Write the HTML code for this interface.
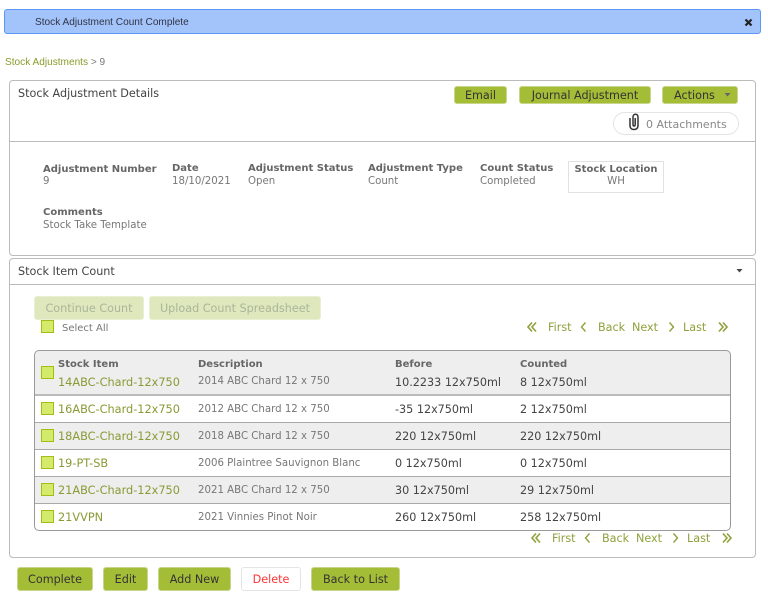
<!DOCTYPE html>
<html><head><meta charset="utf-8">
<style>
html,body{margin:0;padding:0;background:#fff;width:768px;height:597px;overflow:hidden}
body{position:relative;font-family:"DejaVu Sans","Liberation Sans",sans-serif}
.b,.t,.c,svg{position:absolute;box-sizing:border-box}
.t{white-space:nowrap;line-height:16px;height:16px;font-size:10px;color:#777;margin-top:1px}
.l{font-weight:bold;color:#666;font-size:10px;margin-top:2px}
.v{color:#777;font-size:10.2px;margin-top:2px}
.btn{position:absolute;box-sizing:border-box;background:#a3bd37;border:1px solid #c7d68a;border-radius:3px;color:#333;font-size:11.2px;text-align:center;white-space:nowrap}
.dis{position:absolute;box-sizing:border-box;background:#dfe8bd;border:1px solid #e9efd2;border-radius:3px;color:#aab69a;font-size:11.2px;text-align:center;line-height:24px;height:24px;white-space:nowrap}
.c{width:13px;height:13px;background:#d4ea6a;border:1.5px solid #a3bd17;left:41px}
.g{color:#8a9a35;font-size:11.3px}
.d{color:#777;font-size:10.2px;margin-top:2px}
.q{color:#444;font-size:11.2px}
.p{color:#8fa23c;font-size:11.2px}
.row{position:absolute;left:35px;width:695px;box-sizing:border-box;border-bottom:1px solid #aaa}
</style></head><body>

<div class="b" style="left:4px;top:9px;width:757px;height:25px;background:#a2c4fb;border:1px solid #5b97f5;border-radius:3px"></div>
<div class="t" style="left:35px;top:14px;font-family:'Liberation Sans',sans-serif;font-size:10.1px;color:#334">Stock Adjustment Count Complete</div>
<svg style="left:744px;top:18px" width="9" height="9" viewBox="0 0 9 9"><path d="M1.5 1.500L7.500 7.500M7.500 1.500L1.500 7.500" stroke="#222" stroke-width="2.200"/></svg>

<div class="t" style="left:5px;top:54px;font-family:'Liberation Sans',sans-serif;font-size:10.100px;color:#777"><span style="color:#8a9a2a">Stock Adjustments</span> &gt; 9</div>

<div class="b" style="left:9px;top:80px;width:747px;height:176px;border:1px solid #bbb;border-radius:4px"></div>
<div class="b" style="left:10px;top:141px;width:745px;height:1px;background:#bbb"></div>
<div class="t" style="left:18px;top:85px;font-size:11.200px;color:#444">Stock Adjustment Details</div>

<div class="btn" style="left:454px;top:86px;width:53px;height:18px;line-height:18px">Email</div>
<div class="btn" style="left:519px;top:86px;width:132px;height:18px;line-height:18px">Journal Adjustment</div>
<div class="btn" style="left:662px;top:86px;width:76px;height:18px;line-height:18px;text-align:left;padding-left:11px">Actions</div>
<svg style="left:724px;top:93px" width="7" height="4" viewBox="0 0 7 4"><path d="M0.500 0H6.500L3.500 3.500Z" fill="#666"/></svg>

<div class="b" style="left:613px;top:112px;width:126px;height:23px;border:1px solid #e4e4e4;border-radius:12px"></div>
<svg style="left:628px;top:113px" width="12" height="18" viewBox="0 0 12 18"><path d="M2 5V12.500C2 15 3.500 16.500 6 16.500S10 15 10 12.500V4C10 2.300 9 1.200 7.500 1.200S5 2.300 5 4V11.500C5 12.500 5.300 13 6 13S7.200 12.500 7.200 11.500V5" fill="none" stroke="#333" stroke-width="1.500"/></svg>
<div class="t" style="left:646px;top:116px;font-size:11px;color:#888">0 Attachments</div>

<div class="t l" style="left:43px;top:160px">Adjustment Number</div>
<div class="t v" style="left:43px;top:172px">9</div>
<div class="t l" style="left:172px;top:159px">Date</div>
<div class="t v" style="left:172px;top:172px">18/10/2021</div>
<div class="t l" style="left:248px;top:159px">Adjustment Status</div>
<div class="t v" style="left:248px;top:172px">Open</div>
<div class="t l" style="left:368px;top:159px">Adjustment Type</div>
<div class="t v" style="left:368px;top:172px">Count</div>
<div class="t l" style="left:480px;top:159px">Count Status</div>
<div class="t v" style="left:480px;top:172px">Completed</div>
<div class="b" style="left:568px;top:161px;width:96px;height:32px;border:1px solid #e2e2e2"></div>
<div class="t l" style="left:568px;width:96px;text-align:center;top:160px">Stock Location</div>
<div class="t v" style="left:568px;width:96px;text-align:center;top:172px">WH</div>
<div class="t l" style="left:43px;top:203px">Comments</div>
<div class="t v" style="left:43px;top:216px">Stock Take Template</div>

<div class="b" style="left:9px;top:258px;width:747px;height:300px;border:1px solid #bbb;border-radius:4px"></div>
<div class="b" style="left:10px;top:284px;width:745px;height:1px;background:#bbb"></div>
<div class="t" style="left:18px;top:263px;font-size:11.200px;color:#444">Stock Item Count</div>
<svg style="left:736px;top:269px" width="7" height="4" viewBox="0 0 7 4"><path d="M0.500 0H6.500L3.500 3.500Z" fill="#444"/></svg>

<div class="dis" style="left:34px;top:296px;width:110px">Continue Count</div>
<div class="dis" style="left:149px;top:296px;width:172px">Upload Count Spreadsheet</div>
<div class="c" style="top:320px"></div>
<div class="t" style="left:62px;top:320px;font-size:10px;color:#777">Select All</div>

<svg style="left:527px;top:321px" width="10" height="12" viewBox="0 0 10 12"><path d="M5 1.500L1 6L5 10.500M9 1.500L5 6L9 10.500" fill="none" stroke="#8fa23c" stroke-width="1.600"/></svg>
<div class="t p" style="left:548px;top:319px">First</div>
<svg style="left:580px;top:321px" width="7" height="12" viewBox="0 0 7 12"><path d="M5.500 1.500L1.500 6L5.500 10.500" fill="none" stroke="#8fa23c" stroke-width="1.400"/></svg>
<div class="t p" style="left:598px;top:319px">Back</div>
<div class="t p" style="left:632px;top:319px">Next</div>
<svg style="left:668px;top:321px" width="7" height="12" viewBox="0 0 7 12"><path d="M1.500 1.500L5.500 6L1.500 10.500" fill="none" stroke="#8fa23c" stroke-width="1.400"/></svg>
<div class="t p" style="left:683px;top:319px">Last</div>
<svg style="left:718px;top:321px" width="10" height="12" viewBox="0 0 10 12"><path d="M1 1.500L5 6L1 10.500M5 1.500L9 6L5 10.500" fill="none" stroke="#8fa23c" stroke-width="1.600"/></svg>

<div class="row" style="top:351px;height:45px;background:#eee;border-bottom:2px solid #bbb;border-radius:4px 4px 0 0"></div>
<div class="row" style="top:396px;height:27px;background:#fff"></div>
<div class="row" style="top:423px;height:27px;background:#eee"></div>
<div class="row" style="top:450px;height:27px;background:#fff"></div>
<div class="row" style="top:477px;height:27px;background:#eee"></div>
<div class="row" style="top:504px;height:26px;background:#fff;border-bottom:0"></div>
<div class="b" style="left:34px;top:350px;width:697px;height:181px;border:1px solid #999;border-radius:5px"></div>

<div class="t l" style="left:58px;top:355px">Stock Item</div>
<div class="t l" style="left:198px;top:355px">Description</div>
<div class="t l" style="left:395px;top:355px">Before</div>
<div class="t l" style="left:520px;top:355px">Counted</div>

<div class="c" style="top:366px"></div>
<div class="t g" style="left:58px;top:374px">14ABC-Chard-12x750</div>
<div class="t d" style="left:198px;top:372px">2014 ABC Chard 12 x 750</div>
<div class="t q" style="left:395px;top:374px">10.2233 12x750ml</div>
<div class="t q" style="left:520px;top:374px">8 12x750ml</div>

<div class="c" style="top:402px"></div>
<div class="t g" style="left:58px;top:401px">16ABC-Chard-12x750</div>
<div class="t d" style="left:198px;top:400px">2012 ABC Chard 12 x 750</div>
<div class="t q" style="left:395px;top:401px">-35 12x750ml</div>
<div class="t q" style="left:520px;top:401px">2 12x750ml</div>

<div class="c" style="top:429px"></div>
<div class="t g" style="left:58px;top:428px">18ABC-Chard-12x750</div>
<div class="t d" style="left:198px;top:427px">2018 ABC Chard 12 x 750</div>
<div class="t q" style="left:395px;top:428px">220 12x750ml</div>
<div class="t q" style="left:520px;top:428px">220 12x750ml</div>

<div class="c" style="top:456px"></div>
<div class="t g" style="left:58px;top:455px">19-PT-SB</div>
<div class="t d" style="left:198px;top:454px">2006 Plaintree Sauvignon Blanc</div>
<div class="t q" style="left:395px;top:455px">0 12x750ml</div>
<div class="t q" style="left:520px;top:455px">0 12x750ml</div>

<div class="c" style="top:483px"></div>
<div class="t g" style="left:58px;top:482px">21ABC-Chard-12x750</div>
<div class="t d" style="left:198px;top:481px">2021 ABC Chard 12 x 750</div>
<div class="t q" style="left:395px;top:482px">30 12x750ml</div>
<div class="t q" style="left:520px;top:482px">29 12x750ml</div>

<div class="c" style="top:510px"></div>
<div class="t g" style="left:58px;top:509px">21VVPN</div>
<div class="t d" style="left:198px;top:508px">2021 Vinnies Pinot Noir</div>
<div class="t q" style="left:395px;top:509px">260 12x750ml</div>
<div class="t q" style="left:520px;top:509px">258 12x750ml</div>

<svg style="left:531px;top:532px" width="10" height="12" viewBox="0 0 10 12"><path d="M5 1.500L1 6L5 10.500M9 1.500L5 6L9 10.500" fill="none" stroke="#8fa23c" stroke-width="1.600"/></svg>
<div class="t p" style="left:552px;top:530px">First</div>
<svg style="left:584px;top:532px" width="7" height="12" viewBox="0 0 7 12"><path d="M5.500 1.500L1.500 6L5.500 10.500" fill="none" stroke="#8fa23c" stroke-width="1.400"/></svg>
<div class="t p" style="left:602px;top:530px">Back</div>
<div class="t p" style="left:636px;top:530px">Next</div>
<svg style="left:672px;top:532px" width="7" height="12" viewBox="0 0 7 12"><path d="M1.500 1.500L5.500 6L1.500 10.500" fill="none" stroke="#8fa23c" stroke-width="1.400"/></svg>
<div class="t p" style="left:687px;top:530px">Last</div>
<svg style="left:722px;top:532px" width="10" height="12" viewBox="0 0 10 12"><path d="M1 1.500L5 6L1 10.500M5 1.500L9 6L5 10.500" fill="none" stroke="#8fa23c" stroke-width="1.600"/></svg>

<div class="btn" style="left:17px;top:567px;width:76px;height:24px;line-height:24px">Complete</div>
<div class="btn" style="left:103px;top:567px;width:45px;height:24px;line-height:24px">Edit</div>
<div class="btn" style="left:158px;top:567px;width:73px;height:24px;line-height:24px">Add New</div>
<div class="btn" style="left:241px;top:567px;width:60px;height:24px;line-height:24px;background:#fff;border-color:#e4e4e4;color:#f33">Delete</div>
<div class="btn" style="left:311px;top:567px;width:89px;height:24px;line-height:24px">Back to List</div>
</body></html>
